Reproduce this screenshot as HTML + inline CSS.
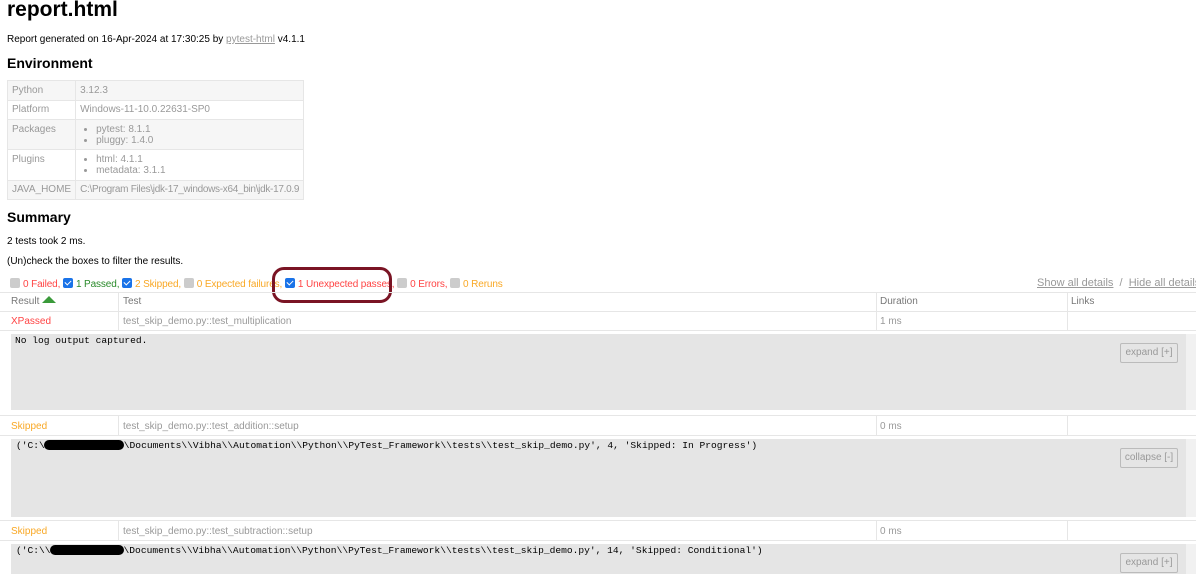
<!DOCTYPE html>
<html><head><meta charset="utf-8"><style>
body{margin:0;width:1196px;height:574px;overflow:hidden;background:#fff;font-family:"Liberation Sans",Arial,sans-serif;font-size:10px;color:#000;position:relative}
.a{position:absolute;white-space:nowrap}
h1{position:absolute;left:7px;top:-2px;margin:0;font-size:21px;font-weight:bold}
h2{position:absolute;left:7px;margin:0;font-size:14px;font-weight:bold}
.env{position:absolute;left:7px;top:80px;border-collapse:collapse;color:#999;font-size:10px;white-space:nowrap}
.env td{border:1px solid #e6e6e6;padding:0 4px;vertical-align:top}
.env tr:nth-child(odd){background:#f6f6f6}
.env ul{margin:0;padding-left:16px}
.cb{display:inline-block;width:10px;height:10px;border-radius:2px;vertical-align:-1px;margin-right:3px}
.on{background:#1a73e8}
.off{background:#ccc}
.cb.on::after{content:"";display:block;width:3px;height:5px;border:solid #fff;border-width:0 1.5px 1.5px 0;transform:rotate(45deg);margin:1px 0 0 3px}
.hl{position:absolute;left:0;width:1196px;border-top:1px solid #e6e6e6}
.vl{position:absolute;border-left:1px solid #e6e6e6}
.log{position:absolute;left:11px;width:1175px;background:#e5e5e5;font-family:"Liberation Mono",monospace;font-size:9.6px;color:#000}
.sb{position:absolute;left:1186px;width:10px;background:#f1f1f1}
.btn{position:absolute;left:1120px;width:56px;height:18px;border:1px solid #bbb;border-radius:2px;color:#999;font-size:10px;text-align:center;line-height:18px;background:#e5e5e5}
.blk{display:inline-block;background:#000;height:10px;border-radius:5px;vertical-align:-2px}
</style></head><body>
<h1>report.html</h1>
<div class="a" style="left:7px;top:34px;font-size:10px">Report generated on 16-Apr-2024 at 17:30:25 by <span style="color:#999;text-decoration:underline">pytest-html</span> v4.1.1</div>
<h2 style="top:55px">Environment</h2>
<table class="env">
<tr style="height:20px"><td style="width:56px;padding-top:4px">Python</td><td style="width:218px;padding-top:4px">3.12.3</td></tr>
<tr style="height:19px"><td style="padding-top:3px">Platform</td><td style="padding-top:3px">Windows-11-10.0.22631-SP0</td></tr>
<tr style="height:30px"><td style="padding-top:4px">Packages</td><td style="padding-top:4px"><ul><li>pytest: 8.1.1</li><li>pluggy: 1.4.0</li></ul></td></tr>
<tr style="height:31px"><td style="padding-top:4px">Plugins</td><td style="padding-top:4px"><ul><li>html: 4.1.1</li><li>metadata: 3.1.1</li></ul></td></tr>
<tr style="height:19px"><td style="padding-top:3px">JAVA_HOME</td><td style="padding-top:3px;letter-spacing:-0.3px">C:\Program Files\jdk-17_windows-x64_bin\jdk-17.0.9</td></tr>
</table>
<h2 style="top:209px">Summary</h2>
<div class="a" style="left:7px;top:236px">2 tests took 2 ms.</div>
<div class="a" style="left:7px;top:256px">(Un)check the boxes to filter the results.</div>
<div class="a" style="left:10px;top:278px;letter-spacing:-0.12px">
<span class="cb off"></span><span style="color:#f44">0 Failed,</span> <span class="cb on"></span><span style="color:#2a8a2a">1 Passed,</span> <span class="cb on"></span><span style="color:#f9a825">2 Skipped,</span> <span class="cb off"></span><span style="color:#f9a825">0 Expected failures,</span> <span class="cb on"></span><span style="color:#f44">1 Unexpected passes,</span> <span class="cb off"></span><span style="color:#f44">0 Errors,</span> <span class="cb off"></span><span style="color:#f9a825">0 Reruns</span></div>
<div class="a" style="left:272px;top:267px;width:114px;height:30px;border:3px solid #7a1424;border-radius:12px"></div>
<div class="a" style="left:1037px;top:277px;color:#999;font-size:11px"><u>Show all details</u> &nbsp;/&nbsp; <u>Hide all details</u></div>

<div class="hl" style="top:292px"></div>
<div class="hl" style="top:311px"></div>
<div class="hl" style="top:330px"></div>
<div class="vl" style="left:118px;top:292px;height:38px"></div>
<div class="vl" style="left:876px;top:292px;height:38px"></div>
<div class="vl" style="left:1067px;top:292px;height:38px"></div>
<div class="a" style="left:11px;top:296px;color:#777">Result <span style="display:inline-block;width:0;height:0;border-left:7px solid transparent;border-right:7px solid transparent;border-bottom:7px solid #3a9a3a;vertical-align:1px"></span></div>
<div class="a" style="left:123px;top:296px;color:#777">Test</div>
<div class="a" style="left:880px;top:296px;color:#777">Duration</div>
<div class="a" style="left:1071px;top:296px;color:#777">Links</div>
<div class="a" style="left:11px;top:316px;color:#f44">XPassed</div>
<div class="a" style="left:123px;top:316px;color:#999">test_skip_demo.py::test_multiplication</div>
<div class="a" style="left:880px;top:316px;color:#999">1 ms</div>
<div class="log" style="top:334px;height:76px"><div style="padding:1px 0 0 4px">No log output captured.</div></div>
<div class="sb" style="top:334px;height:76px"></div>
<div class="btn" style="top:343px">expand [+]</div>

<div class="hl" style="top:415px"></div>
<div class="hl" style="top:435px"></div>
<div class="vl" style="left:118px;top:415px;height:20px"></div>
<div class="vl" style="left:876px;top:415px;height:20px"></div>
<div class="vl" style="left:1067px;top:415px;height:20px"></div>
<div class="a" style="left:11px;top:421px;color:#f9a825">Skipped</div>
<div class="a" style="left:123px;top:421px;color:#999">test_skip_demo.py::test_addition::setup</div>
<div class="a" style="left:880px;top:421px;color:#999">0 ms</div>
<div class="log" style="top:439px;height:78px"><div style="padding:1px 0 0 5px">('C:\<span class="blk" style="width:80px;margin-left:-1px"></span>\Documents\\Vibha\\Automation\\Python\\PyTest_Framework\\tests\\test_skip_demo.py', 4, 'Skipped: In Progress')</div></div>
<div class="sb" style="top:439px;height:78px"></div>
<div class="btn" style="top:448px">collapse [-]</div>

<div class="hl" style="top:520px"></div>
<div class="hl" style="top:540px"></div>
<div class="vl" style="left:118px;top:520px;height:20px"></div>
<div class="vl" style="left:876px;top:520px;height:20px"></div>
<div class="vl" style="left:1067px;top:520px;height:20px"></div>
<div class="a" style="left:11px;top:526px;color:#f9a825">Skipped</div>
<div class="a" style="left:123px;top:526px;color:#999">test_skip_demo.py::test_subtraction::setup</div>
<div class="a" style="left:880px;top:526px;color:#999">0 ms</div>
<div class="log" style="top:544px;height:30px"><div style="padding:1px 0 0 5px">('C:\\<span class="blk" style="width:74px;margin-left:-1px"></span>\Documents\\Vibha\\Automation\\Python\\PyTest_Framework\\tests\\test_skip_demo.py', 14, 'Skipped: Conditional')</div></div>
<div class="sb" style="top:544px;height:30px"></div>
<div class="btn" style="top:553px">expand [+]</div>
</body></html>
